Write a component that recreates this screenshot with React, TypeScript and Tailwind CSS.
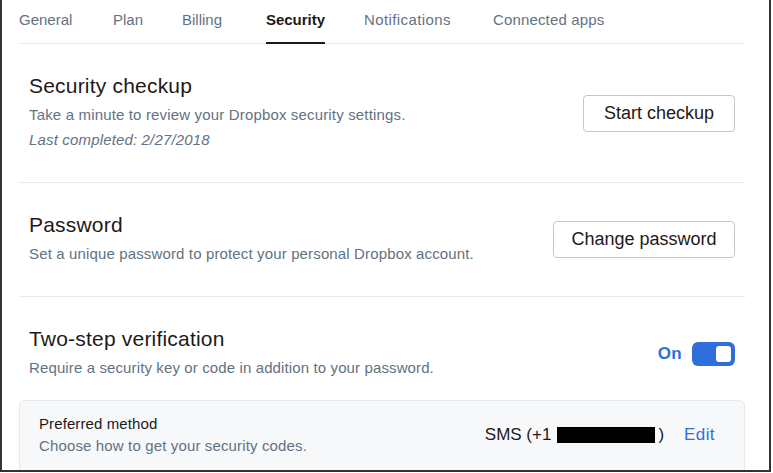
import React from "react";

type Tab = { label: string; cls: string };

const tabs: Tab[] = [
  { label: "General", cls: "w-[53px]" },
  { label: "Plan", cls: "w-[28px] ml-[41px]" },
  { label: "Billing", cls: "w-[43px] ml-[41px]" },
  { label: "Security", cls: "w-[59px] ml-[41px]" },
  { label: "Notifications", cls: "w-[87px] ml-[39px] tracking-[0.4px]" },
  { label: "Connected apps", cls: "w-[112px] ml-[42px] tracking-[0.15px]" },
];

function Tabs() {
  return (
    <div className="flex h-[44px] border-b border-[#e6e8eb]">
      {tabs.map((t) => {
        const active = t.label === "Security";
        return (
          <div
            key={t.label}
            className={
              active
                ? `${t.cls} flex items-start justify-center whitespace-nowrap pt-[9px] text-[15px] font-bold text-[#1e1919] border-b-2 border-[#1e1919] -mb-px`
                : `${t.cls} flex items-start whitespace-nowrap pt-[9px] text-[15px] text-[#637282]`
            }
          >
            {t.label}
          </div>
        );
      })}
    </div>
  );
}

function OutlineButton({ label, width }: { label: string; width: string }) {
  return (
    <button
      className={`${width} h-[37px] rounded-[4px] border border-[#c1c7cd] bg-white text-[18px] text-[#1e1919] flex items-center justify-center`}
    >
      {label}
    </button>
  );
}

export default function App() {
  return (
    <div className="w-[773px] h-[473px] bg-white overflow-hidden" style={{ fontFamily: '"Liberation Sans", Arial, sans-serif' }}>
      <div className="w-[771px] h-[472px] border-l-2 border-r-2 border-b-2 border-[#333] overflow-hidden">
        <div className="w-[726px] ml-[17px]">
          <Tabs />

          {/* Security checkup */}
          <div className="flex items-center justify-between px-[10px] pt-[30px] pb-[30px] border-b border-[#e6e8eb]">
            <div>
              <div className="text-[21px] leading-[24px] tracking-[0.2px] text-[#1e1919]">Security checkup</div>
              <div className="mt-[5px] text-[15px] leading-[24px] tracking-[0.16px] text-[#637282]">
                Take a minute to review your Dropbox security settings.
              </div>
              <div className="mt-[1px] text-[15px] leading-[24px] tracking-[0.16px] italic text-[#637282]">
                Last completed: 2/27/2018
              </div>
            </div>
            <OutlineButton label="Start checkup" width="w-[152px]" />
          </div>

          {/* Password */}
          <div className="flex items-center justify-between px-[10px] pt-[30px] pb-[30px] border-b border-[#e6e8eb]">
            <div>
              <div className="text-[21px] leading-[24px] tracking-[0.2px] text-[#1e1919]">Password</div>
              <div className="mt-[5px] text-[15px] leading-[24px] tracking-[0.14px] text-[#637282]">
                Set a unique password to protect your personal Dropbox account.
              </div>
            </div>
            <OutlineButton label="Change password" width="w-[182px]" />
          </div>

          {/* Two-step verification */}
          <div className="flex items-center justify-between px-[10px] pt-[30px]">
            <div>
              <div className="text-[21px] leading-[24px] tracking-[0.2px] text-[#1e1919]">Two-step verification</div>
              <div className="mt-[5px] text-[15px] leading-[24px] tracking-[0.12px] text-[#637282]">
                Require a security key or code in addition to your password.
              </div>
            </div>
            <div className="flex items-center gap-[10px]">
              <span className="text-[17px] font-bold tracking-[0.3px] text-[#2f6fdb]">On</span>
              <div className="w-[43px] h-[24px] rounded-[6px] bg-[#2f6fdb] flex items-center justify-end pr-[4px]">
                <div className="w-[15px] h-[16px] rounded-[3px] bg-white" />
              </div>
            </div>
          </div>

          {/* Preferred method */}
          <div className="mt-[20px] rounded-[6px] border border-[#e6e8eb] bg-[#f7f8fa] pl-[19px] pr-[29px] pt-[12px] pb-[20px] flex items-center justify-between">
            <div>
              <div className="text-[15px] leading-[22px] tracking-[0.1px] text-[#1e1919]">Preferred method</div>
              <div className="text-[15px] leading-[22px] tracking-[0.14px] text-[#637282]">Choose how to get your security codes.</div>
            </div>
            <div className="flex items-center text-[17px] text-[#1e1919]">
              <span>SMS (+1</span>
              <span className="ml-[6px] inline-block w-[98px] h-[16px] bg-black" />
              <span className="ml-[3px]">)</span>
              <span className="ml-[20px] tracking-[0.4px] text-[#2f6fdb]">Edit</span>
            </div>
          </div>
        </div>
      </div>
    </div>
  );
}
